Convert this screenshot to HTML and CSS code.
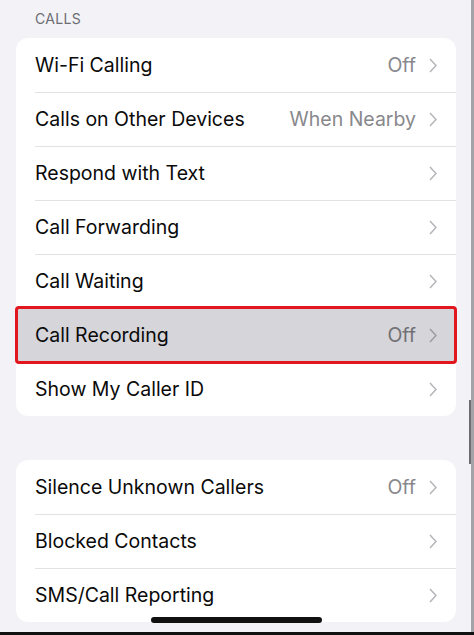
FILE: index.html
```html
<!DOCTYPE html>
<html>
<head lang="en">
    <meta charset="UTF-8">
    <title>Phone</title>
    <link rel="stylesheet" href="styles.css">
</head>
<body>
    <div id="screen">
        <p class="group-title">CALLS</p>
        <ul class="group">
            <li><span class="label">Wi-Fi Calling</span><span class="value">Off</span><svg class="chev" viewBox="0 0 8 15"><polyline points="1,1 7,7.5 1,14"/></svg></li>
            <li><span class="label">Calls on Other Devices</span><span class="value">When Nearby</span><svg class="chev" viewBox="0 0 8 15"><polyline points="1,1 7,7.5 1,14"/></svg></li>
            <li><span class="label">Respond with Text</span><svg class="chev" viewBox="0 0 8 15"><polyline points="1,1 7,7.5 1,14"/></svg></li>
            <li><span class="label">Call Forwarding</span><svg class="chev" viewBox="0 0 8 15"><polyline points="1,1 7,7.5 1,14"/></svg></li>
            <li><span class="label">Call Waiting</span><svg class="chev" viewBox="0 0 8 15"><polyline points="1,1 7,7.5 1,14"/></svg></li>
            <li class="selected"><span class="label">Call Recording</span><span class="value">Off</span><svg class="chev" viewBox="0 0 8 15"><polyline points="1,1 7,7.5 1,14"/></svg></li>
            <li><span class="label">Show My Caller ID</span><svg class="chev" viewBox="0 0 8 15"><polyline points="1,1 7,7.5 1,14"/></svg></li>
        </ul>
        <ul class="group">
            <li><span class="label">Silence Unknown Callers</span><span class="value">Off</span><svg class="chev" viewBox="0 0 8 15"><polyline points="1,1 7,7.5 1,14"/></svg></li>
            <li><span class="label">Blocked Contacts</span><svg class="chev" viewBox="0 0 8 15"><polyline points="1,1 7,7.5 1,14"/></svg></li>
            <li><span class="label">SMS/Call Reporting</span><svg class="chev" viewBox="0 0 8 15"><polyline points="1,1 7,7.5 1,14"/></svg></li>
        </ul>
        <div id="scrollbar"></div>
        <div id="home-bar"></div>
    </div>
</body>
</html>
```
FILE: styles.css
```css
*{
    margin: 0;
    padding: 0;
}
ul{
    list-style: none;
}
body{
    background: #111;
    font-family: "Inter", "Liberation Sans", sans-serif;
}
#screen{
    position: relative;
    width: 471px;
    height: 632px;
    background: #f2f2f7;
    border-right: 3px solid #a4a4a8;
    overflow: hidden;
}
.group-title{
    height: 38px;
    padding-left: 35px;
    line-height: 38px;
    font-size: 14px;
    color: #6d6d72;
    letter-spacing: 0.3px;
}
.group{
    margin: 0 15px 44px 16px;
    background: #fff;
    border-radius: 12px;
}
.group li{
    position: relative;
    display: flex;
    align-items: center;
    height: 54px;
    padding: 0 19px 0 19px;
    font-size: 19.5px;
    color: #0a0a0a;
}
/* hairline starts under the label, not at the card edge */
.group li + li::before{
    content: "";
    position: absolute;
    top: 0;
    left: 19px;
    right: 0;
    height: 1px;
    background: #e2e2e6;
}
.group li.selected::before,
.group li.selected + li::before{
    display: none;
}
.label{
    flex: 1;
}
.value{
    color: #88888c;
    margin-right: 13px;
}
.chev{
    width: 8px;
    height: 15px;
    fill: none;
    stroke: #b6b6bb;
    stroke-width: 1.6;
}
.group li.selected{
    background: #d5d5da;
}
.group li.selected .value{
    color: #717175;
}
.group li.selected .chev{
    stroke: #9d9da2;
}
.group li.selected::after{
    content: "";
    position: absolute;
    top: -2px;
    bottom: -2px;
    left: -1px;
    right: -1px;
    border: 3px solid #e2161f;
    border-radius: 4px;
}
#scrollbar{
    position: absolute;
    right: 0;
    top: 400px;
    width: 2px;
    height: 64px;
    background: #6e6e72;
}
#home-bar{
    position: absolute;
    left: 151px;
    top: 617px;
    width: 171px;
    height: 6px;
    border-radius: 3px;
    background: #111;
}
```
